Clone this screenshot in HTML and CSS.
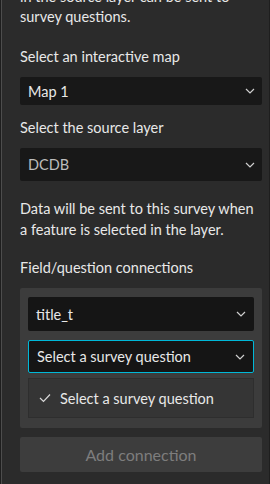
FILE: index.html
```html
<!DOCTYPE html>
<html lang="en">
<head>
    <meta charset="UTF-8">
    <meta name="viewport" content="width=device-width, initial-scale=1.0">
    <title>Survey connection</title>
    <link rel="stylesheet" href="styles.css">
</head>
<body>
    <div class="panel">
        <p class="intro">in the source layer can be sent to<br>survey questions.</p>

        <label class="label">Select an interactive map</label>
        <div class="select small">
            <span>Map 1</span>
            <svg class="chev" width="10" height="6" viewBox="0 0 10 6"><path d="M1 1l4 4 4-4" fill="none" stroke="#cfcfcf" stroke-width="1.2"/></svg>
        </div>

        <label class="label after-select">Select the source layer</label>
        <div class="select muted">
            <span>DCDB</span>
            <svg class="chev" width="10" height="6" viewBox="0 0 10 6"><path d="M1 1l4 4 4-4" fill="none" stroke="#cfcfcf" stroke-width="1.2"/></svg>
        </div>

        <p class="note">Data will be sent to this survey when a feature is selected in the layer.</p>

        <label class="label">Field/question connections</label>
        <div class="connections">
            <div class="select inner">
                <span>title_t</span>
                <svg class="chev" width="10" height="6" viewBox="0 0 10 6"><path d="M1 1l4 4 4-4" fill="none" stroke="#cfcfcf" stroke-width="1.2"/></svg>
            </div>
            <div class="select inner focused">
                <span>Select a survey question</span>
                <svg class="chev" width="10" height="6" viewBox="0 0 10 6"><path d="M1 1l4 4 4-4" fill="none" stroke="#cfcfcf" stroke-width="1.2"/></svg>
            </div>
            <div class="menu">
                <svg width="12" height="10" viewBox="0 0 12 10"><path d="M1 5l3.5 3.5L11 1.5" fill="none" stroke="#d8d8d8" stroke-width="1.2"/></svg>
                <span>Select a survey question</span>
            </div>
        </div>

        <button class="add" disabled>Add connection</button>
    </div>
</body>
</html>
```

FILE: styles.css
```css
html, body {
    margin: 0;
    padding: 0;
    background-color: #1e1e1e;
}

body {
    font-family: Lato, "Open Sans", sans-serif;
    font-size: 14.5px;
    color: #e8e8e8;
    height: 484px;
    overflow: hidden;
}

.panel {
    margin-left: 1px;
    margin-right: 1px;
    border-left: 1px solid #4d4d4d;
    background-color: #2b2b2b;
    height: 484px;
    padding: 0 7px 0 18px;
    display: flex;
    flex-direction: column;
}

.intro {
    margin: -13px 0 0 0;
    line-height: 20px;
}

.label {
    display: block;
    line-height: 20px;
    margin-top: 18px;
}

.intro + .label {
    margin-top: 20px;
}

.label.after-select {
    margin-top: 13px;
}

.select {
    display: flex;
    align-items: center;
    justify-content: space-between;
    background-color: #181818;
    border-radius: 2px;
    height: 33px;
    padding: 0 7px 0 8px;
    margin-top: 10px;
    box-sizing: border-box;
}

.select.small {
    height: 28px;
}

.select.muted span {
    color: #bdbdbd;
}

.note {
    margin: 18px 0 0 0;
    line-height: 20.5px;
}

.connections {
    margin-top: 10px;
    background-color: #3c3c3c;
    border-radius: 2px;
    padding: 9px 8px 10px 8px;
}

.select.inner {
    margin-top: 0;
    height: 34px;
    padding-right: 8px;
    background-color: #151515;
}

.select.inner + .select.inner {
    margin-top: 9px;
}

.select.focused {
    border: 1px solid #00b8d8;
    height: 33px;
}

.menu {
    margin-top: 5px;
    height: 40px;
    box-sizing: border-box;
    background-color: #353535;
    border: 1px solid #2e2e2e;
    display: flex;
    align-items: center;
    gap: 9px;
    padding-left: 10px;
}

.add {
    margin-top: 9px;
    height: 35px;
    border: none;
    border-radius: 2px;
    background-color: #3d3d3d;
    color: #7d7d7d;
    font-family: inherit;
    font-size: 16px;
}
```
